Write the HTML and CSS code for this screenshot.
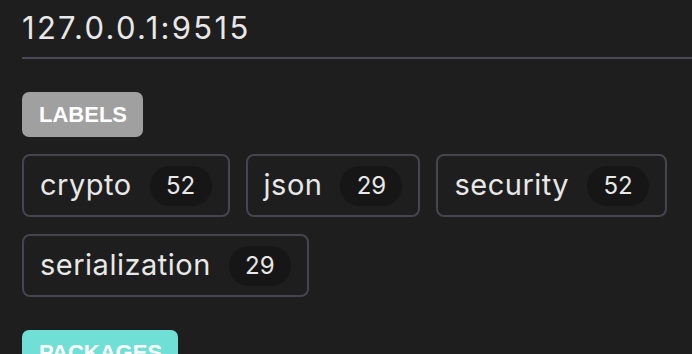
FILE: index.html
```html
<!DOCTYPE html>
<html>
<head>
<meta charset="utf-8">
<link rel="stylesheet" href="styles.css">
</head>
<body>
<div class="page">
  <div class="title">127.0.0.1:9515</div>
  <section class="section">
    <div class="badge badge-gray">Labels</div>
    <div class="chips">
      <div class="chip"><span class="chip-name">crypto</span><span class="count">52</span></div>
      <div class="chip"><span class="chip-name">json</span><span class="count">29</span></div>
      <div class="chip"><span class="chip-name">security</span><span class="count">52</span></div>
      <div class="chip"><span class="chip-name">serialization</span><span class="count">29</span></div>
    </div>
  </section>
  <section class="section">
    <div class="badge badge-teal">Packages</div>
  </section>
</div>
</body>
</html>
```
FILE: styles.css
```css
html, body {
  margin: 0;
  padding: 0;
  background: #1e1e1e;
}
body {
  font-family: Inter, "Noto Sans", sans-serif;
  color: #e8e8e8;
  width: 692px;
  height: 354px;
  overflow: hidden;
}
.page {
  padding: 8px 0 0 22px;
}
.title {
  font-size: 31px;
  line-height: 40px;
  padding-bottom: 9px;
  border-bottom: 2px solid #4a4a54;
  letter-spacing: 2.3px;
}
.section {
  padding-top: 33px;
}
.badge {
  display: inline-block;
  font-family: "Liberation Sans", Arial, sans-serif;
  font-weight: 700;
  font-size: 22px;
  line-height: 45px;
  height: 45px;
  padding: 0 16px 0 17px;
  border-radius: 7px;
  text-transform: uppercase;
  color: #fff;
}
.badge-gray { background: #a0a0a0; }
.badge-teal { background: #70dfd6; }
.chips {
  display: flex;
  flex-wrap: wrap;
  gap: 17px 16px;
  margin-top: 17px;
}
.chip {
  display: flex;
  align-items: center;
  gap: 18px;
  height: 63px;
  box-sizing: border-box;
  padding: 0 16px 0 16px;
  border: 2px solid #45454e;
  border-radius: 8px;
}
.chip-name {
  font-size: 29px;
  letter-spacing: 0.5px;
  line-height: 1;
  padding-bottom: 2px;
}
.count {
  display: inline-flex;
  align-items: center;
  justify-content: center;
  height: 40px;
  min-width: 62px;
  box-sizing: border-box;
  padding: 0 15px;
  border-radius: 20px;
  background: #161616;
  font-size: 24px;
}
```
